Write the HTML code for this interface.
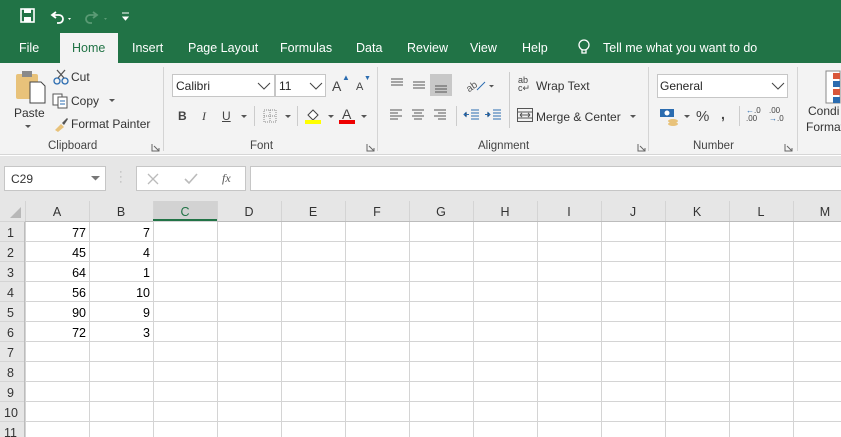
<!DOCTYPE html>
<html><head><style>
*{margin:0;padding:0;box-sizing:border-box}
body{width:841px;height:437px;overflow:hidden;background:#fff;font-family:"Liberation Sans",sans-serif;font-size:12px;color:#262626;position:relative}
.a{position:absolute}
.t{position:absolute;white-space:nowrap}
.w{color:#fff;font-size:12.5px}
.r{color:#333;font-size:12px}
.lbl{color:#444;font-size:11.5px;top:140px}
.sep{position:absolute;width:1px;background:#d4d4d4}
.g{stroke:#555;fill:none;stroke-width:1}
</style></head><body>
<div class="a" style="left:0;top:0;width:841px;height:63px;background:#217346"></div>
<!-- QAT -->
<svg class="a" style="left:19px;top:6px" width="120" height="20">
<rect x="2" y="3" width="13" height="13" fill="none" stroke="#fff" stroke-width="1.6"/><rect x="5" y="3" width="7" height="4" fill="#fff"/><rect x="5" y="11" width="7" height="5" fill="#fff"/>
<path d="M37 6 l-4 3 4 3 M33 9 h7 a4 4 0 0 1 0 8 h-2" stroke="#fff" stroke-width="1.8" fill="none"/>
<path d="M49 12 l3 0 -1.5 2z" fill="#fff"/>
<path d="M74 6 l4 3 -4 3 M78 9 h-7 a4 4 0 0 0 0 8 h2" stroke="#5a9a74" stroke-width="1.8" fill="none"/>
<path d="M85 12 l3 0 -1.5 2z" fill="#5a9a74"/>
<path d="M103 7 h7 M104 11 l2.5 3 2.5-3z" stroke="#fff" fill="#fff"/>
</svg>
<div class="a" style="left:60px;top:33px;width:58px;height:30px;background:#f3f3f3"></div>
<div class="t w" style="left:19px;top:41px">File</div>
<div class="t" style="left:72px;top:41px;color:#217346;font-size:12.5px">Home</div>
<div class="t w" style="left:132px;top:41px">Insert</div>
<div class="t w" style="left:188px;top:41px">Page Layout</div>
<div class="t w" style="left:280px;top:41px">Formulas</div>
<div class="t w" style="left:356px;top:41px">Data</div>
<div class="t w" style="left:407px;top:41px">Review</div>
<div class="t w" style="left:470px;top:41px">View</div>
<div class="t w" style="left:522px;top:41px">Help</div>
<svg class="a" style="left:577px;top:39px" width="14" height="18"><circle cx="7" cy="6" r="5" fill="none" stroke="#fff" stroke-width="1.3"/><path d="M5 11v3h4v-3" stroke="#fff" fill="none" stroke-width="1.3"/></svg>
<div class="t w" style="left:603px;top:41px">Tell me what you want to do</div>
<!-- ribbon -->
<div class="a" style="left:0;top:63px;width:841px;height:92px;background:#f3f3f3;border-bottom:1px solid #d6d6d6"></div>
<div class="sep" style="left:163px;top:67px;height:84px"></div>
<div class="sep" style="left:377px;top:67px;height:84px"></div>
<div class="sep" style="left:648px;top:67px;height:84px"></div>
<div class="sep" style="left:797px;top:67px;height:84px"></div>
<!-- clipboard -->
<svg class="a" style="left:15px;top:69px" width="32" height="36"><rect x="1" y="5" width="22" height="25" rx="2" fill="#e8c27a"/><rect x="7" y="2" width="10" height="6" fill="#8a8a8a"/><path d="M15 13h11l4 4v17h-15z" fill="#fff" stroke="#444"/></svg>
<div class="t r" style="left:14px;top:106px">Paste</div>
<svg class="a" style="left:24px;top:124px" width="8" height="5"><path d="M1 1h6l-3 3z" fill="#555"/></svg>
<svg class="a" style="left:53px;top:69px" width="16" height="16"><circle cx="4" cy="12" r="3" fill="none" stroke="#2b6cb0" stroke-width="1.3"/><circle cx="12" cy="12" r="3" fill="none" stroke="#2b6cb0" stroke-width="1.3"/><path d="M5 9l7-8M11 9l-7-8" stroke="#555" stroke-width="1.3"/></svg>
<div class="t r" style="left:71px;top:70px">Cut</div>
<svg class="a" style="left:52px;top:93px" width="16" height="16"><rect x="1" y="1" width="9" height="11" fill="#fff" stroke="#555"/><rect x="6" y="4" width="9" height="11" fill="#fff" stroke="#555"/><path d="M8 8h5M8 11h5" stroke="#2b6cb0"/></svg>
<div class="t r" style="left:71px;top:94px">Copy</div>
<svg class="a" style="left:108px;top:98px" width="8" height="5"><path d="M1 1h6l-3 3z" fill="#555"/></svg>
<svg class="a" style="left:53px;top:116px" width="16" height="16"><path d="M2 14l6-6 3 3-6 5z" fill="#e8c27a"/><path d="M9 7l5-5 1 1-4 6z" fill="#555"/></svg>
<div class="t r" style="left:71px;top:117px">Format Painter</div>
<div class="t lbl" style="left:48px">Clipboard</div>
<svg class="a" style="left:151px;top:143px" width="9" height="9"><path d="M1 1v7h7M3 3l5 5M5 8h3V5" stroke="#666" fill="none"/></svg>
<!-- font -->
<div class="a" style="left:172px;top:74px;width:103px;height:23px;background:#fff;border:1px solid #c6c6c6"></div>
<div class="t" style="left:176px;top:79px;font-size:12px">Calibri</div>
<svg class="a" style="left:257px;top:82px" width="14" height="8"><path d="M1 1l6 6 6-6" stroke="#444" fill="none"/></svg>
<div class="a" style="left:275px;top:74px;width:51px;height:23px;background:#fff;border:1px solid #c6c6c6"></div>
<div class="t" style="left:279px;top:79px">11</div>
<svg class="a" style="left:309px;top:82px" width="14" height="8"><path d="M1 1l6 6 6-6" stroke="#444" fill="none"/></svg>
<div class="t" style="left:332px;top:78px;font-size:14px;color:#444">A</div><div class="t" style="left:342px;top:73px;font-size:8px;color:#2b6cb0">▲</div>
<div class="t" style="left:356px;top:81px;font-size:11px;color:#444">A</div><div class="t" style="left:364px;top:75px;font-size:7px;color:#2b6cb0">▼</div>
<div class="t" style="left:178px;top:109px;font-weight:bold;color:#444">B</div>
<div class="t" style="left:202px;top:109px;font-style:italic;color:#444;font-family:'Liberation Serif'">I</div>
<div class="t" style="left:222px;top:109px;text-decoration:underline;color:#444">U</div>
<svg class="a" style="left:240px;top:114px" width="8" height="5"><path d="M1 1h6l-3 3z" fill="#555"/></svg>
<div class="sep" style="left:254px;top:106px;height:20px;background:#ccc"></div>
<svg class="a" style="left:263px;top:109px" width="14" height="14"><rect x="1" y="1" width="12" height="12" fill="none" stroke="#888" stroke-dasharray="1 1"/><path d="M7 1v12M1 7h12" stroke="#888" stroke-dasharray="1 1"/></svg>
<svg class="a" style="left:284px;top:114px" width="8" height="5"><path d="M1 1h6l-3 3z" fill="#555"/></svg>
<div class="sep" style="left:297px;top:106px;height:20px;background:#ccc"></div>
<svg class="a" style="left:305px;top:107px" width="16" height="18"><path d="M3 8l5-5 5 5-5 5z" fill="#fff" stroke="#444"/><rect x="0" y="13" width="16" height="4" fill="#ffff00"/></svg>
<svg class="a" style="left:327px;top:114px" width="8" height="5"><path d="M1 1h6l-3 3z" fill="#555"/></svg>
<div class="t" style="left:342px;top:106px;font-size:14px;color:#444">A</div>
<div class="a" style="left:339px;top:120px;width:16px;height:4px;background:#e00"></div>
<svg class="a" style="left:360px;top:114px" width="8" height="5"><path d="M1 1h6l-3 3z" fill="#555"/></svg>
<div class="t lbl" style="left:250px">Font</div>
<svg class="a" style="left:366px;top:143px" width="9" height="9"><path d="M1 1v7h7M3 3l5 5M5 8h3V5" stroke="#666" fill="none"/></svg>
<!-- alignment -->
<svg class="a" style="left:388px;top:74px" width="72" height="22"><rect x="42" y="0" width="22" height="22" fill="#c8c8c8"/><path d="M3 5h12M3 8h12M3 11h12M25 8h12M25 11h12M25 14h12M47 12h12M47 15h12M47 18h12" stroke="#555"/></svg>
<svg class="a" style="left:388px;top:108px" width="60" height="14"><path d="M2 2h12M2 5h8M2 8h12M2 11h8M24 2h12M26 5h8M24 8h12M26 11h8M46 2h12M50 5h8M46 8h12M50 11h8" stroke="#555"/></svg>
<svg class="a" style="left:465px;top:76px" width="30" height="18"><text x="1" y="13" font-size="10" fill="#555" transform="rotate(-35 8 10)" font-family="Liberation Sans">ab</text><path d="M12 14l8-8" stroke="#2b6cb0"/><path d="M24 9h5l-2.5 2.5z" fill="#555"/></svg>
<div class="sep" style="left:456px;top:106px;height:20px;background:#ccc"></div>
<svg class="a" style="left:463px;top:108px" width="40" height="14"><path d="M8 2h8M8 5h8M8 8h8M8 11h8M1 6.5h5M3.5 4l-2.5 2.5 2.5 2.5" stroke="#2b6cb0"/><path d="M30 2h8M30 5h8M30 8h8M30 11h8M22 6.5h5M24.5 4l2.5 2.5-2.5 2.5" stroke="#2b6cb0"/></svg>
<div class="sep" style="left:509px;top:72px;height:56px;background:#ccc"></div>
<div class="t" style="left:518px;top:76px;font-size:9px;color:#444;line-height:8px">ab<br>c↵</div>
<div class="t r" style="left:536px;top:79px">Wrap Text</div>
<svg class="a" style="left:517px;top:108px" width="16" height="14"><rect x="0.5" y="0.5" width="15" height="13" fill="none" stroke="#555"/><path d="M1 4h14M1 10h14M3 7h10M3 7l2-2M3 7l2 2M13 7l-2-2M13 7l-2 2" stroke="#555"/></svg>
<div class="t r" style="left:536px;top:110px">Merge &amp; Center</div>
<svg class="a" style="left:629px;top:114px" width="8" height="5"><path d="M1 1h6l-3 3z" fill="#555"/></svg>
<div class="t lbl" style="left:478px">Alignment</div>
<svg class="a" style="left:637px;top:143px" width="9" height="9"><path d="M1 1v7h7M3 3l5 5M5 8h3V5" stroke="#666" fill="none"/></svg>
<!-- number -->
<div class="a" style="left:657px;top:74px;width:131px;height:24px;background:#fff;border:1px solid #c6c6c6"></div>
<div class="t" style="left:660px;top:79px">General</div>
<svg class="a" style="left:771px;top:82px" width="14" height="8"><path d="M1 1l6 6 6-6" stroke="#444" fill="none"/></svg>
<svg class="a" style="left:659px;top:108px" width="20" height="18"><rect x="1" y="1" width="14" height="8" fill="#2b6cb0"/><circle cx="8" cy="5" r="2.5" fill="#fff"/><ellipse cx="14" cy="13" rx="5" ry="2" fill="#e8c27a"/><ellipse cx="14" cy="16" rx="5" ry="2" fill="#e8c27a"/></svg>
<svg class="a" style="left:683px;top:114px" width="8" height="5"><path d="M1 1h6l-3 3z" fill="#555"/></svg>
<div class="t" style="left:696px;top:108px;font-size:15px;color:#444">%</div>
<div class="t" style="left:721px;top:106px;font-size:14px;color:#444;font-weight:bold">,</div>
<div class="sep" style="left:739px;top:106px;height:20px;background:#ccc"></div>
<div class="t" style="left:746px;top:107px;font-size:8px;line-height:8px;color:#444"><span style="color:#2b6cb0">←</span>.0<br>.00</div>
<div class="t" style="left:769px;top:107px;font-size:8px;line-height:8px;color:#444">.00<br><span style="color:#2b6cb0">→</span>.0</div>
<div class="t lbl" style="left:693px">Number</div>
<svg class="a" style="left:784px;top:143px" width="9" height="9"><path d="M1 1v7h7M3 3l5 5M5 8h3V5" stroke="#666" fill="none"/></svg>
<svg class="a" style="left:825px;top:70px" width="16" height="36"><rect x="1" y="1" width="14" height="32" fill="#fff" stroke="#888"/><rect x="8" y="3" width="7" height="6" fill="#d9573a"/><rect x="8" y="11" width="7" height="6" fill="#2b6cb0"/><rect x="8" y="19" width="7" height="6" fill="#d9573a"/><rect x="8" y="27" width="7" height="6" fill="#2b6cb0"/></svg>
<div class="t r" style="left:808px;top:104px">Condi</div>
<div class="t r" style="left:806px;top:120px">Format</div>
<!-- formula bar -->
<div class="a" style="left:0;top:156px;width:841px;height:45px;background:#e6e6e6"></div>
<div class="a" style="left:4px;top:166px;width:102px;height:25px;background:#fff;border:1px solid #c6c6c6"></div>
<div class="t" style="left:11px;top:172px;color:#333">C29</div>
<svg class="a" style="left:91px;top:176px" width="9" height="5"><path d="M0 0h9l-4.5 4.5z" fill="#777"/></svg>
<div class="t" style="left:119px;top:170px;color:#aaa;font-size:11px;line-height:5px">·<br>·<br>·</div>
<div class="a" style="left:136px;top:166px;width:110px;height:25px;background:#fff;border:1px solid #c6c6c6"></div>
<svg class="a" style="left:146px;top:172px" width="90" height="14"><path d="M2 2l10 10M12 2L2 12" stroke="#bbb" stroke-width="1.3"/><path d="M39 7l4 4 8-9" stroke="#bbb" stroke-width="1.6" fill="none"/></svg>
<div class="t" style="left:222px;top:171px;font-family:'Liberation Serif';font-style:italic;color:#555">fx</div>
<div class="a" style="left:250px;top:166px;width:600px;height:25px;background:#fff;border:1px solid #c6c6c6"></div>
<!-- grid -->
<svg class="a" style="left:0;top:201px" width="841" height="236" font-family="Liberation Sans" font-size="12.5">
<rect x="0" y="0" width="841" height="20" fill="#e6e6e6"/>
<rect x="0" y="0" width="25" height="236" fill="#e6e6e6"/>
<rect x="153" y="0" width="64" height="20" fill="#d2d2d2"/>
<path d="M21 6v11h-11z" fill="#b8b8b8"/>
<g stroke="#d4d4d4">
<path d="M25.5 0v236M89.5 0v236M153.5 0v236M217.5 0v236M281.5 0v236M345.5 0v236M409.5 0v236M473.5 0v236M537.5 0v236M601.5 0v236M665.5 0v236M729.5 0v236M793.5 0v236"/>
<path d="M0 20.5h841M0 40.5h841M0 60.5h841M0 80.5h841M0 100.5h841M0 120.5h841M0 140.5h841M0 160.5h841M0 180.5h841M0 200.5h841M0 220.5h841"/>
</g>
<path d="M25 20.5h128M217 20.5h624" stroke="#bcbcbc"/>
<path d="M24.5 21v215" stroke="#bcbcbc"/>
<rect x="153" y="18" width="64" height="2" fill="#217346"/>
<g fill="#333" text-anchor="middle">
<text x="57" y="15">A</text><text x="121" y="15">B</text><text x="185" y="15" fill="#217346">C</text><text x="249" y="15">D</text><text x="313" y="15">E</text><text x="377" y="15">F</text><text x="441" y="15">G</text><text x="505" y="15">H</text><text x="569" y="15">I</text><text x="633" y="15">J</text><text x="697" y="15">K</text><text x="761" y="15">L</text><text x="825" y="15">M</text>
</g>
<g fill="#333">
<text x="7" y="36">1</text><text x="7" y="56">2</text><text x="7" y="76">3</text><text x="7" y="96">4</text><text x="7" y="116">5</text><text x="7" y="136">6</text><text x="7" y="156">7</text><text x="7" y="176">8</text><text x="7" y="196">9</text><text x="4" y="216">10</text><text x="4" y="236">11</text>
</g>
<g fill="#000" text-anchor="end">
<text x="86" y="36">77</text><text x="150" y="36">7</text>
<text x="86" y="56">45</text><text x="150" y="56">4</text>
<text x="86" y="76">64</text><text x="150" y="76">1</text>
<text x="86" y="96">56</text><text x="150" y="96">10</text>
<text x="86" y="116">90</text><text x="150" y="116">9</text>
<text x="86" y="136">72</text><text x="150" y="136">3</text>
</g>
</svg>
</body></html>
